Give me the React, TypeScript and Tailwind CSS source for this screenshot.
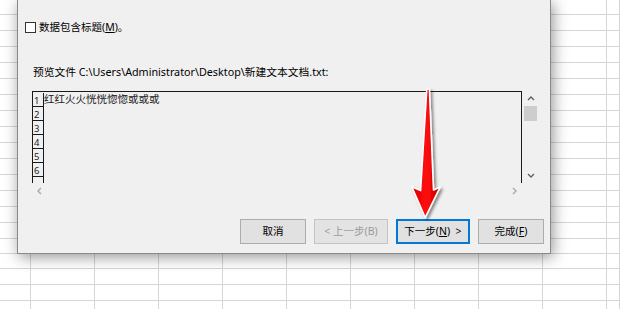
import React from 'react';

const rowHeights = [15, 16, 16, 16, 16, 16, 16, 16, 16, 16, 16, 16, 16, 16, 16, 15, 15, 16, 16, 12];
const colWidths = [31, 64, 64, 64, 64, 64, 64, 64, 64, 64, 13];

const previewRows = ['红红火火恍恍惚惚或或或', '', '', '', '', '', ''];

const Chevron: React.FC<{ dir: 'up' | 'down' | 'left' | 'right'; color?: string }> = ({ dir, color = '#606060' }) => {
  const d = {
    up: 'M1,5 L4,2 L7,5',
    down: 'M1,2 L4,5 L7,2',
    left: 'M5,1 L2,4 L5,7',
    right: 'M2,1 L5,4 L2,7',
  }[dir];
  return (
    <svg width="8" height="8" viewBox="0 0 8 8">
      <path d={d} fill="none" stroke={color} strokeWidth="1.4" />
    </svg>
  );
};

const Button: React.FC<{ w: string; variant?: 'normal' | 'disabled' | 'default'; children: React.ReactNode }> = ({
  w,
  variant = 'normal',
  children,
}) => {
  const styles =
    variant === 'disabled'
      ? 'bg-[#e3e3e3] border border-[#c4c4c4] text-[#9b9b9b]'
      : variant === 'default'
        ? 'bg-[#e1e1e1] border-2 border-[#0078d7] text-black'
        : 'bg-[#e1e1e1] border border-[#adadad] text-black';
  return (
    <div className={`${w} h-[25px] flex items-center justify-center text-[10.5px] leading-none ${styles}`}>
      {children}
    </div>
  );
};

export default function App() {
  return (
    <div className="relative w-[620px] h-[309px] overflow-hidden bg-white font-['Noto_Sans','Noto_Sans_CJK_SC',sans-serif]">
      {/* spreadsheet grid behind the dialog */}
      <div className="flex flex-col">
        {rowHeights.map((h, r) => (
          <div key={r} className="flex border-b border-[#d6d6d6] shrink-0" style={{ height: h }}>
            {colWidths.map((w, c) => (
              <div key={c} className="h-full border-r border-[#d6d6d6] shrink-0" style={{ width: w }} />
            ))}
          </div>
        ))}
      </div>

      {/* dialog window */}
      <div className="absolute left-[17px] top-0 w-[534px] h-[254px] bg-[#f0f0f0] border-x border-b border-[#8a8a8a] shadow-[2px_3px_14px_rgba(0,0,0,0.42)] text-black">
        <div className="flex items-center pl-[7px] pt-[22px]">
          <div className="w-[11px] h-[11px] bg-white border border-[#333]" />
          <span className="ml-[3px] text-[10.5px] leading-[11px]">
            数据包含标题(<span className="underline underline-offset-1">M</span>)。
          </span>
        </div>

        <div className="mt-[32px] pl-[15px] text-[10.75px] leading-[14px] whitespace-nowrap">
          预览文件 C:\Users\Administrator\Desktop\新建文本文档.txt:
        </div>

        <div className="mt-[12px] ml-[14px] flex flex-col w-[507px]">
          <div className="flex">
            <div className="w-[490px] h-[92px] border-t border-l border-r border-[#1a1a1a] border-b-white overflow-hidden pt-px">
              {previewRows.map((txt, i) => (
                <div key={i} className="flex h-[14px]">
                  <div className="w-[11px] h-full border-r border-b border-[#1a1a1a] flex items-end pl-[1px] text-[9.5px] leading-[11px] text-[#222]">
                    {i < 6 ? i + 1 : ''}
                  </div>
                  <div className="text-[10.5px] leading-[13px] text-[#222] whitespace-nowrap">{txt}</div>
                </div>
              ))}
            </div>
            <div className="w-[17px] h-[92px] flex flex-col items-center">
              <div className="mt-[4px] h-[8px] flex items-center">
                <Chevron dir="up" />
              </div>
              <div className="mt-[3px] w-[13px] h-[15px] bg-[#cdcdcd]" />
              <div className="mt-auto mb-[3px] h-[8px] flex items-center">
                <Chevron dir="down" />
              </div>
            </div>
          </div>
          <div className="w-[490px] h-[16px] flex items-center justify-between pl-[4px] pr-[3px]">
            <Chevron dir="left" color="#a8a8a8" />
            <Chevron dir="right" color="#a8a8a8" />
          </div>
        </div>

        <div className="mt-[20px] flex justify-end gap-[8px] pr-[6px]">
          <Button w="w-[66px]">取消</Button>
          <Button w="w-[74px]" variant="disabled">
            &lt; 上一步(B)
          </Button>
          <Button w="w-[74px]" variant="default">
            下一步(<span className="underline underline-offset-1">N</span>)&nbsp;&nbsp;&gt;
          </Button>
          <Button w="w-[66px]">
            完成(<span className="underline underline-offset-1">F</span>)
          </Button>
        </div>
      </div>

      {/* red annotation arrow */}
      <svg className="absolute left-0 top-0 pointer-events-none" width="620" height="309" viewBox="0 0 620 309">
        <defs>
          <linearGradient id="redFill" x1="0" x2="1" y1="0" y2="0">
            <stop offset="0" stopColor="#d80000" />
            <stop offset="0.5" stopColor="#ff0a0a" />
            <stop offset="1" stopColor="#cc0000" />
          </linearGradient>
          <filter id="arrowShadow" x="-60%" y="-10%" width="220%" height="130%">
            <feDropShadow dx="2" dy="2" stdDeviation="1.6" floodColor="#000" floodOpacity="0.45" />
          </filter>
        </defs>
        <path
          d="M426.8,89 L429.4,89 L433.5,190 L440.2,187 L425.2,217.5 L411.8,186.7 L420.6,190.6 Z"
          fill="url(#redFill)"
          stroke="#ffffff"
          strokeWidth="1.6"
          strokeLinejoin="round"
          filter="url(#arrowShadow)"
        />
      </svg>
    </div>
  );
}
